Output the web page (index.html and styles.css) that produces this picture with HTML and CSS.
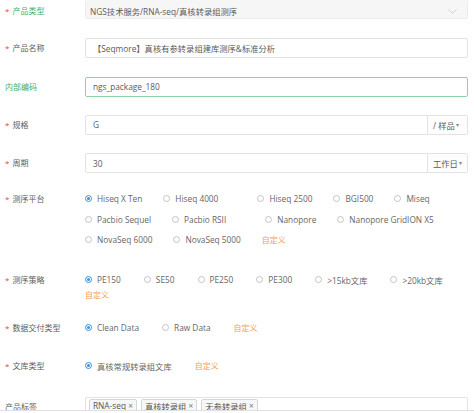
FILE: index.html
```html
<!DOCTYPE html>
<html lang="zh-CN">
<head>
<meta charset="utf-8">
<title>产品编辑</title>
<link rel="stylesheet" href="styles.css">
</head>
<body>
<form class="form">
  <div class="row row--first">
    <div class="label label--ok"><span class="req">*</span>产品类型</div>
    <div class="field field--select">
      <span class="field-text">NGS技术服务/RNA-seq/真核转录组测序</span>
      <svg class="chevron" width="9" height="5" viewBox="0 0 9 5"><polyline points="0.5,0.5 4.5,4.5 8.5,0.5" fill="none" stroke="#c8c8c8" stroke-width="0.8"/></svg>
    </div>
  </div>

  <div class="row">
    <div class="label"><span class="req">*</span>产品名称</div>
    <div class="field"><span class="field-text">【Seqmore】真核有参转录组建库测序&amp;标准分析</span></div>
  </div>

  <div class="row">
    <div class="label label--ok">内部编码</div>
    <div class="field field--ok"><span class="field-text">ngs_package_180</span></div>
  </div>

  <div class="row">
    <div class="label"><span class="req">*</span>规格</div>
    <div class="group">
      <div class="field field--grouped"><span class="field-text">G</span></div>
      <div class="addon">/ 样品<span class="caret">▾</span></div>
    </div>
  </div>

  <div class="row row--before-radio">
    <div class="label"><span class="req">*</span>周期</div>
    <div class="group">
      <div class="field field--grouped"><span class="field-text">30</span></div>
      <div class="addon">工作日<span class="caret">▾</span></div>
    </div>
  </div>

  <div class="row row--gap-l">
    <div class="label label--radio"><span class="req">*</span>测序平台</div>
    <div class="radios">
      <span class="radio"><span class="dot dot--on"></span>Hiseq X Ten</span>
      <span class="radio radio--wide"><span class="dot"></span>Hiseq 4000</span>
      <span class="radio"><span class="dot"></span>Hiseq 2500</span>
      <span class="radio"><span class="dot"></span>BGI500</span>
      <span class="radio"><span class="dot"></span>Miseq</span>
      <span class="radio"><span class="dot"></span>Pacbio Sequel</span>
      <span class="radio radio--wide"><span class="dot"></span>Pacbio RSII</span>
      <span class="radio"><span class="dot"></span>Nanopore</span>
      <span class="radio"><span class="dot"></span>Nanopore GridION X5</span>
      <span class="radio"><span class="dot"></span>NovaSeq 6000</span>
      <span class="radio"><span class="dot"></span>NovaSeq 5000</span>
      <a class="custom">自定义</a>
    </div>
  </div>

  <div class="row row--gap-m">
    <div class="label label--radio"><span class="req">*</span>测序策略</div>
    <div class="radios">
      <span class="radio radio--s"><span class="dot dot--on"></span>PE150</span>
      <span class="radio radio--s"><span class="dot"></span>SE50</span>
      <span class="radio radio--s"><span class="dot"></span>PE250</span>
      <span class="radio radio--s"><span class="dot"></span>PE300</span>
      <span class="radio radio--s"><span class="dot"></span>&gt;15kb文库</span>
      <span class="radio radio--s"><span class="dot"></span>&gt;20kb文库</span>
      <a class="custom">自定义</a>
    </div>
  </div>

  <div class="row row--gap-m">
    <div class="label label--radio"><span class="req">*</span>数据交付类型</div>
    <div class="radios">
      <span class="radio radio--s"><span class="dot dot--on"></span>Clean Data</span>
      <span class="radio radio--s"><span class="dot"></span>Raw Data</span>
      <a class="custom">自定义</a>
    </div>
  </div>

  <div class="row row--gap-xl">
    <div class="label label--radio"><span class="req">*</span>文库类型</div>
    <div class="radios">
      <span class="radio radio--s"><span class="dot dot--on"></span>真核常规转录组文库</span>
      <a class="custom">自定义</a>
    </div>
  </div>

  <div class="row">
    <div class="label">产品标签</div>
    <div class="field field--tags">
      <span class="tag">RNA-seq <span class="x">×</span></span>
      <span class="tag">真核转录组 <span class="x">×</span></span>
      <span class="tag">无参转录组 <span class="x">×</span></span>
    </div>
  </div>
</form>
<div class="footer"></div>
</body>
</html>
```

FILE: styles.css
```css
* { box-sizing: border-box; }

html, body {
  margin: 0;
  padding: 0;
  background: #ffffff;
}

body {
  font-family: "Open Sans", "Noto Sans CJK SC", sans-serif;
  font-size: 8.3px;
  color: #5a5a5a;
  overflow: hidden;
}

.form {
  width: 474px;
  padding: 0 6px 0 5px;
}

.row {
  display: flex;
  align-items: flex-start;
  margin-bottom: 18.3px;
}

.row--first { margin-top: 0; }
.row--first .label { line-height: 22px; }
.row--before-radio { margin-bottom: 15.5px; }
.row--gap-l { margin-bottom: 19.5px; }
.row--gap-m { margin-bottom: 17.5px; }
.row--gap-xl { margin-bottom: 20.75px; }

.label {
  flex: 0 0 80px;
  height: 20px;
  line-height: 20px;
  font-size: 8px;
  color: #5e5e5e;
  white-space: nowrap;
}

.label--radio {
  height: 20.5px;
  line-height: 20.5px;
}

.label--ok { color: #45ad69; }

.req {
  color: #e8473d;
  margin-right: 3px;
}

.field {
  flex: 1;
  height: 20px;
  border: 1px solid #e3e3e3;
  border-radius: 2px;
  background: #ffffff;
  display: flex;
  align-items: center;
  padding: 0 7px;
  white-space: nowrap;
  overflow: hidden;
}

.field--select {
  height: 19px;
  background: #f6f6f6;
  border-color: #ececec;
  border-top-color: transparent;
  padding: 3px 10px 0 4px;
  justify-content: space-between;
}

.field--ok {
  border-color: #8fd1a7;
}

.field-text { color: #5a5a5a; }

.chevron { display: block; }

.group {
  flex: 1;
  display: flex;
}

.field--grouped {
  border-radius: 2px 0 0 2px;
}

.addon {
  flex: 0 0 40px;
  height: 20px;
  border: 1px solid #e3e3e3;
  border-left: none;
  border-radius: 0 2px 2px 0;
  background: #fdfdfd;
  display: flex;
  align-items: center;
  padding-left: 5px;
  color: #5a5a5a;
  white-space: nowrap;
}

.caret {
  font-size: 6px;
  color: #888888;
  margin-left: 1px;
}

.radios {
  flex: 1;
  display: flex;
  flex-wrap: wrap;
  align-items: center;
}

.radio {
  display: inline-flex;
  align-items: center;
  height: 20.5px;
  margin-right: 21px;
  color: #666666;
  white-space: nowrap;
}

.radio--s { margin-right: 23px; }
.radio--wide { margin-right: 39px; }

.dot {
  width: 7px;
  height: 7px;
  border: 1px solid #c4c4c4;
  border-radius: 50%;
  margin-right: 5px;
  background: #ffffff;
  position: relative;
  flex: 0 0 7px;
}

.dot--on {
  border-color: #3b8fd6;
}

.dot--on::after {
  content: "";
  position: absolute;
  left: 1px;
  top: 1px;
  width: 3px;
  height: 3px;
  border-radius: 50%;
  background: #3b8fd6;
}

.custom {
  font-size: 8px;
  line-height: 10px;
  color: #f2a05a;
  cursor: pointer;
}

.field--tags {
  padding: 0 3px;
  gap: 4px;
  align-items: flex-start;
  padding-top: 1px;
}

.tag {
  display: inline-flex;
  align-items: center;
  height: 14px;
  padding: 0 3px;
  border: 1px solid #d6d6d6;
  border-radius: 2px;
  background: #f7f7f7;
  color: #555555;
  white-space: pre;
}

.tag .x { color: #777777; }

.footer {
  position: fixed;
  left: 0;
  right: 0;
  bottom: 0;
  height: 3px;
  border-top: 1px solid #e0e0e0;
  background: #ffffff;
}
```
